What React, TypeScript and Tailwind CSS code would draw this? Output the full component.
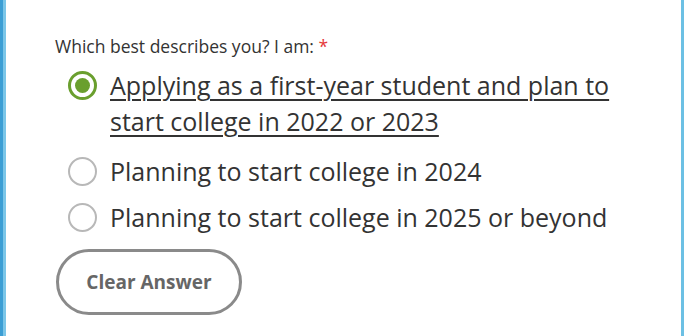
const options = [
  "Applying as a first-year student and plan to start college in 2022 or 2023",
  "Planning to start college in 2024",
  "Planning to start college in 2025 or beyond",
];

function Radio({ checked }: { checked: boolean }) {
  if (checked) {
    return (
      <span className="mt-[4px] flex h-[29px] w-[29px] shrink-0 items-center justify-center rounded-full border-[3px] border-[#6a9f2e] bg-white">
        <span className="h-[15px] w-[15px] rounded-full bg-[#6a9f2e]" />
      </span>
    );
  }
  return (
    <span className="mt-[4px] h-[29px] w-[29px] shrink-0 rounded-full border-[2.5px] border-[#b8b8b8] bg-white" />
  );
}

export default function App() {
  return (
    <div className="h-[336px] w-[684px] overflow-hidden bg-white" style={{ fontFamily: '"Open Sans", "Noto Sans", sans-serif' }}>
      <div className="flex h-full border-l-[3px] border-r-[3px] border-l-[#3c9ed4] border-r-[#6cc0e4]">
        <div className="h-full w-[3px] bg-[#7cc6e8]" />
        <div className="flex-1 pl-[49px] pt-[35px]">
          <p className="text-[17.5px] leading-[22px] text-[#333]">
            Which best describes you? I am: <span className="text-[#e5383b]">*</span>
          </p>
          <div className="mt-[10px] flex flex-col gap-[10px] pl-[13px]">
            {options.map((o, i) => (
              <label key={o} className={"flex items-start gap-[13px] " + (i === 0 ? "mb-[4px]" : "")}>
                <Radio checked={i === 0} />
                <span
                  className={
                    "max-w-[505px] text-[25px] leading-[36px] text-[#333] " +
                    (i === 0 ? "underline decoration-[1.5px] underline-offset-[4px]" : "")
                  }
                >
                  {o}
                </span>
              </label>
            ))}
          </div>
          <button className="mt-[14px] ml-[1px] flex h-[66px] w-[186px] items-center justify-center rounded-full border-[3px] border-[#8a8a8a] bg-white text-[19px] font-bold text-[#666]">
            Clear Answer
          </button>
        </div>
      </div>
    </div>
  );
}
